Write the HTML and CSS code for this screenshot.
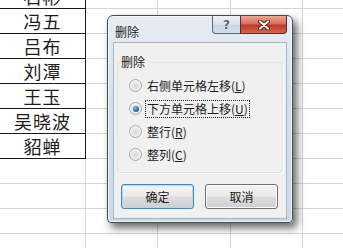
FILE: index.html
```html
<!DOCTYPE html>
<html>
  <head>
    <title>删除</title>
    <meta charset="UTF-8" />
    <link rel="stylesheet" href="styles.css">
  </head>
  <body>
    <div class="sheet">
      <div class="row data"><div class="cell a">石彬</div><div class="cell b"></div><div class="cell c"></div><div class="cell d"></div><div class="cell e"></div></div>
      <div class="row data"><div class="cell a">冯五</div><div class="cell b"></div><div class="cell c"></div><div class="cell d"></div><div class="cell e"></div></div>
      <div class="row data"><div class="cell a">吕布</div><div class="cell b"></div><div class="cell c"></div><div class="cell d"></div><div class="cell e"></div></div>
      <div class="row data"><div class="cell a">刘潭</div><div class="cell b"></div><div class="cell c"></div><div class="cell d"></div><div class="cell e"></div></div>
      <div class="row data"><div class="cell a">王玉</div><div class="cell b"></div><div class="cell c"></div><div class="cell d"></div><div class="cell e"></div></div>
      <div class="row data"><div class="cell a">吴晓波</div><div class="cell b"></div><div class="cell c"></div><div class="cell d"></div><div class="cell e"></div></div>
      <div class="row data"><div class="cell a">貂蝉</div><div class="cell b"></div><div class="cell c"></div><div class="cell d"></div><div class="cell e"></div></div>
      <div class="row"><div class="cell a"></div><div class="cell b"></div><div class="cell c"></div><div class="cell d"></div><div class="cell e"></div></div>
      <div class="row"><div class="cell a"></div><div class="cell b"></div><div class="cell c"></div><div class="cell d"></div><div class="cell e"></div></div>
      <div class="row"><div class="cell a"></div><div class="cell b"></div><div class="cell c"></div><div class="cell d"></div><div class="cell e"></div></div>
      <div class="row"><div class="cell a"></div><div class="cell b"></div><div class="cell c"></div><div class="cell d"></div><div class="cell e"></div></div>
    </div>

    <div class="dialog">
      <div class="titlebar">
        <span class="title">删除</span>
        <div class="caption-buttons">
          <div class="cap-btn help">?</div>
          <div class="cap-btn close">
            <svg width="12" height="10" viewBox="0 0 12 10">
              <path d="M2 1.5 L10 8.5 M10 1.5 L2 8.5" stroke="#4a1e16" stroke-width="4" stroke-linecap="round" />
              <path d="M2 1.5 L10 8.5 M10 1.5 L2 8.5" stroke="#ffffff" stroke-width="2.2" stroke-linecap="round" />
            </svg>
          </div>
        </div>
      </div>

      <div class="panel">
        <fieldset class="group">
          <legend>删除</legend>
          <div class="option">
            <span class="radio"></span>
            <span class="opt-label">右侧单元格左移(<u>L</u>)</span>
          </div>
          <div class="option">
            <span class="radio on"></span>
            <span class="opt-label focused">下方单元格上移(<u>U</u>)</span>
          </div>
          <div class="option">
            <span class="radio"></span>
            <span class="opt-label">整行(<u>R</u>)</span>
          </div>
          <div class="option">
            <span class="radio"></span>
            <span class="opt-label">整列(<u>C</u>)</span>
          </div>
        </fieldset>

        <div class="buttons">
          <button class="btn default">确定</button>
          <button class="btn">取消</button>
        </div>
      </div>
    </div>
  </body>
</html>
```

FILE: styles.css
```css
* {
  box-sizing: border-box;
}

body {
  margin: 0;
  width: 343px;
  height: 248px;
  overflow: hidden;
  position: relative;
  background: #ffffff;
  font-family: "Noto Sans CJK SC", sans-serif;
}

/* spreadsheet */
.sheet {
  margin-top: -16px;
}

.row {
  display: flex;
  height: 25px;
}

.cell {
  flex: none;
  border-right: 1px solid #d4d4d4;
  border-bottom: 1px solid #d4d4d4;
}

.cell.a {
  width: 86px;
  text-align: center;
  font-size: 18px;
  line-height: 24px;
  letter-spacing: 1px;
  color: #1c1c1c;
}

.cell.b {
  width: 72px;
}

.cell.c {
  width: 73px;
}

.cell.d {
  width: 72px;
}

.cell.e {
  flex: 1;
  border-right: 0;
}

.row.data .cell.a {
  border-right-color: #1a1a1a;
  border-bottom-color: #1a1a1a;
}

/* dialog window */
.dialog {
  position: absolute;
  left: 107px;
  top: 15px;
  width: 186px;
  height: 208px;
  display: flex;
  flex-direction: column;
  padding: 0 5px 3px;
  border: 1px solid #3f4b59;
  border-radius: 6px 6px 4px 4px;
  background: linear-gradient(#e8edf3, #d6dfe9 40%, #cfd9e5);
  box-shadow: 4px 5px 8px rgba(0, 0, 0, 0.6), inset 0 0 0 1px rgba(255, 255, 255, 0.7);
  font-size: 12px;
  color: #000;
}

.titlebar {
  display: flex;
  height: 26px;
  flex: none;
}

.title {
  margin-left: 2px;
  padding-top: 8px;
  line-height: 16px;
  color: #1b1b1b;
}

.caption-buttons {
  display: flex;
  margin-left: auto;
  height: 18px;
}

.cap-btn {
  display: flex;
  align-items: center;
  justify-content: center;
  height: 18px;
  border: 1px solid #5d6b7c;
  border-top: 0;
}

.help {
  width: 28px;
  border-right: 0;
  border-radius: 0 0 0 4px;
  background: linear-gradient(#eef2f7, #d7e0ea 50%, #c6d2df 51%, #d3dde8);
  font-family: "DejaVu Sans", sans-serif;
  font-weight: bold;
  font-size: 12px;
  color: #5a6370;
  text-shadow: 0 0 2px #ffffff;
}

.close {
  width: 47px;
  border-color: #5a2a24;
  border-radius: 0 0 4px 0;
  background: linear-gradient(#e8a898, #d8705c 45%, #c03a26 55%, #d66450);
}

/* inner panel */
.panel {
  flex: 1;
  display: flex;
  flex-direction: column;
  background: #f0f0f0;
  border: 1px solid #a6b5c8;
}

.group {
  margin: 11px 3px 0;
  padding: 4px 3px 6px;
  min-width: 0;
  border: 1px solid #dfe4e8;
  border-radius: 3px;
  box-shadow: 1px 1px 0 #ffffff;
}

.group legend {
  padding: 0 2px 0 0;
  line-height: 16px;
  color: #1b1b1b;
}

.option {
  display: flex;
  align-items: center;
  height: 23px;
  padding-left: 8px;
  gap: 3px;
}

.radio {
  display: flex;
  align-items: center;
  justify-content: center;
  width: 13px;
  height: 13px;
  flex: none;
  border-radius: 50%;
  border: 1px solid #a3a9ae;
  background: radial-gradient(circle at 50% 55%, #d8d8d8 0, #e8e8e8 45%, #f8f8f8 80%);
}

.radio.on::after {
  content: "";
  width: 6px;
  height: 6px;
  border-radius: 50%;
  background: radial-gradient(circle at 40% 35%, #8ec3ea, #2a6a9c 60%, #17466e);
}

.opt-label {
  padding: 0 1px;
  line-height: 16px;
  border: 1px dotted transparent;
  color: #1b1b1b;
}

.opt-label.focused {
  border-color: #222;
}

.buttons {
  display: flex;
  gap: 11px;
  margin: 11px 0 0 7px;
}

.btn {
  width: 73px;
  height: 25px;
  padding: 0;
  font-family: inherit;
  font-size: 12px;
  line-height: 16px;
  color: #1b1b1b;
  border: 1px solid #707070;
  border-radius: 3px;
  background: linear-gradient(#f3f3f3, #ebebeb 48%, #dddddd 52%, #cfcfcf);
  box-shadow: inset 0 0 0 1px #fbfbfb;
}

.btn.default {
  border-color: #4a86b4;
  box-shadow: inset 0 0 0 1px #a9dcf5;
}
```
